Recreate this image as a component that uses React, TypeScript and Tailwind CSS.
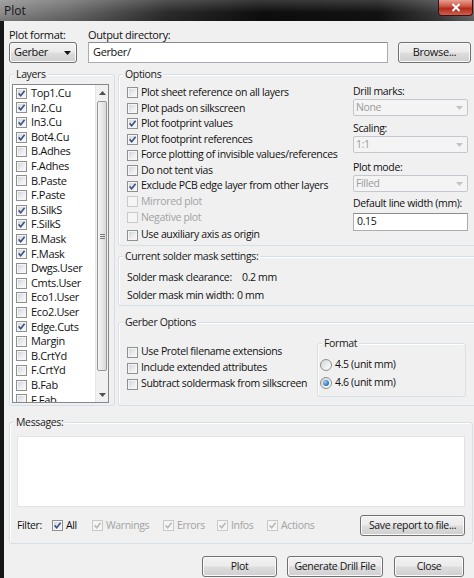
import React from "react";

const FONT = "font-['Open_Sans',sans-serif]";

function Check({ checked = false, disabled = false }: { checked?: boolean; disabled?: boolean }) {
  return (
    <span
      className={`relative inline-block shrink-0 w-[11px] h-[11px] border ${
        disabled
          ? "border-[#c9c9c9] bg-[#f5f5f5]"
          : "border-[#8e8f8f] bg-[linear-gradient(135deg,#cdd1d6_0%,#eeeeee_60%,#fbfbfb_100%)] shadow-[inset_0_0_0_1px_#f6f6f6]"
      }`}
    >
      {checked && (
        <svg viewBox="0 0 9 9" className="absolute left-0 top-0 w-[9px] h-[9px]">
          <path
            d="M1.6 4.4 L3.7 6.7 L7.6 1.7"
            fill="none"
            stroke={disabled ? "#b9b9b9" : "#3b5087"}
            strokeWidth="1.6"
          />
        </svg>
      )}
    </span>
  );
}

function Radio({ checked = false }: { checked?: boolean }) {
  return (
    <span className="relative inline-flex items-center justify-center shrink-0 w-[12px] h-[12px] rounded-full border border-[#8e8f8f] bg-[linear-gradient(135deg,#cfd3d8_0%,#f2f2f2_65%,#ffffff_100%)]">
      {checked && (
        <span className="w-[6px] h-[6px] rounded-full bg-[radial-gradient(circle_at_35%_35%,#9fd0f3_0%,#3c86c4_55%,#1f4f86_100%)]" />
      )}
    </span>
  );
}

function Btn({ children, className = "" }: { children: React.ReactNode; className?: string }) {
  return (
    <div
      className={`flex items-center justify-center h-[21px] border border-[#707070] rounded-[3px] bg-[linear-gradient(to_bottom,#f2f2f2_0%,#ebebeb_48%,#dddddd_52%,#cfcfcf_100%)] shadow-[inset_0_0_0_1px_#fafafa] text-[#151515] ${className}`}
    >
      {children}
    </div>
  );
}

function DisSelect({ value }: { value: string }) {
  return (
    <div className="flex items-center justify-between h-[17px] border border-[#c4c8cc] rounded-[2px] bg-[#f4f4f4] pl-[2px] pr-[4px] text-[#9b9b9b]">
      <span className="leading-[15px]">{value}</span>
      <svg viewBox="0 0 7 4" className="w-[7px] h-[4px]">
        <path d="M0 0 L7 0 L3.5 4 Z" fill="#c3c3c3" />
      </svg>
    </div>
  );
}

function Group({
  label,
  className = "",
  children,
}: {
  label: string;
  className?: string;
  children?: React.ReactNode;
}) {
  return (
    <div className={`relative border border-[#d5dfe5] rounded-[3px] shadow-[inset_1px_1px_0_#ffffff] ${className}`}>
      <span className="absolute left-[4px] top-[-8px] px-[2px] bg-[#f0f0f0] leading-[14px] text-[#1a1a1a] whitespace-nowrap">
        {label}
      </span>
      {children}
    </div>
  );
}

const layers: [string, boolean][] = [
  ["Top1.Cu", true],
  ["In2.Cu", true],
  ["In3.Cu", true],
  ["Bot4.Cu", true],
  ["B.Adhes", false],
  ["F.Adhes", false],
  ["B.Paste", false],
  ["F.Paste", false],
  ["B.SilkS", true],
  ["F.SilkS", true],
  ["B.Mask", true],
  ["F.Mask", true],
  ["Dwgs.User", false],
  ["Cmts.User", false],
  ["Eco1.User", false],
  ["Eco2.User", false],
  ["Edge.Cuts", true],
  ["Margin", false],
  ["B.CrtYd", false],
  ["F.CrtYd", false],
  ["B.Fab", false],
  ["F.Fab", false],
];

const options: [string, boolean, boolean][] = [
  ["Plot sheet reference on all layers", false, false],
  ["Plot pads on silkscreen", false, false],
  ["Plot footprint values", true, false],
  ["Plot footprint references", true, false],
  ["Force plotting of invisible values/references", false, false],
  ["Do not tent vias", false, false],
  ["Exclude PCB edge layer from other layers", true, false],
  ["Mirrored plot", false, true],
  ["Negative plot", false, true],
];

export default function App() {
  return (
    <div className={`w-[474px] h-[578px] overflow-hidden bg-[#f0f0f0] flex flex-col text-[10.5px] tracking-[-0.35px] text-[#111] ${FONT}`}>
      {/* Title bar */}
      <div className="relative h-[21px] shrink-0 flex items-center pl-[4px] bg-[linear-gradient(to_right,#8d8d8d_0%,#6a6a6a_15%,#2c2c2c_35%,#0e0e0e_55%,#121212_80%,#3a3a3a_92%,#6d6d6d_100%)]">
        <div className="absolute inset-0 bg-[linear-gradient(to_bottom,rgba(255,255,255,0.18)_0%,rgba(255,255,255,0)_60%,rgba(0,0,0,0.15)_100%)]" />
        <span className="relative text-[12px] text-[#161616] tracking-normal">Plot</span>
        <div className="absolute right-[1px] top-0 w-[35px] h-[16px] rounded-b-[4px] border border-t-0 border-[#3b1010] bg-[linear-gradient(to_bottom,#e8a090_0%,#c85040_45%,#b02818_55%,#d06050_100%)] flex items-center justify-center">
          <svg viewBox="0 0 10 9" className="w-[10px] h-[9px]">
            <path d="M1.5 1 L8.5 8 M8.5 1 L1.5 8" stroke="#ffffff" strokeWidth="2" />
          </svg>
        </div>
      </div>

      <div className="flex flex-1 min-h-0">
        <div className="w-[4px] shrink-0 bg-[#161616]" />
        <div className="flex-1 flex flex-col pl-[5px] pt-[6px] min-w-0">
          {/* Row 1 */}
          <div className="flex items-end">
            <div className="w-[68px] flex flex-col">
              <span className="h-[15px] leading-[15px] whitespace-nowrap text-[11px]">Plot format:</span>
              <div className="flex items-center justify-between h-[21px] border border-[#707070] rounded-[3px] bg-[linear-gradient(to_bottom,#f2f2f2_0%,#ebebeb_48%,#dddddd_52%,#cfcfcf_100%)] shadow-[inset_0_0_0_1px_#fafafa] pl-[4px] pr-[5px]">
                <span className="text-[11px]">Gerber</span>
                <svg viewBox="0 0 7 4" className="w-[7px] h-[4px]">
                  <path d="M0 0 L7 0 L3.5 4 Z" fill="#111" />
                </svg>
              </div>
            </div>
            <div className="ml-[11px] w-[300px] flex flex-col">
              <span className="h-[15px] leading-[15px] whitespace-nowrap text-[11px]">Output directory:</span>
              <div className="flex items-center h-[21px] bg-white border border-[#abadb3] border-t-[#8a8c92] pl-[4px] text-[11px]">
                Gerber/
              </div>
            </div>
            <Btn className="ml-[10px] w-[73px] text-[11px]">Browse...</Btn>
          </div>

          {/* Main area */}
          <div className="flex mt-[11px]">
            <Group label="Layers" className="w-[106px] h-[332px] shrink-0 pt-[9px] pl-[2px]">
              <div className="flex w-[97px] h-[319px] border border-[#828790] bg-white overflow-hidden">
                <div className="w-[82px] flex flex-col pt-[1px] overflow-hidden">
                  {layers.map(([name, on]) => (
                    <div key={name} className="flex items-center h-[14.6px] shrink-0 pl-[3px] gap-[4px] whitespace-nowrap text-[11px]">
                      <Check checked={on} />
                      <span>{name}</span>
                    </div>
                  ))}
                </div>
                <div className="w-[13px] flex flex-col bg-[#f0f0f0] border-l border-[#e6e6e6]">
                  <div className="h-[16px] flex items-center justify-center">
                    <svg viewBox="0 0 7 4" className="w-[7px] h-[4px]">
                      <path d="M0 4 L7 4 L3.5 0 Z" fill="#505050" />
                    </svg>
                  </div>
                  <div className="h-[270px] mx-[1px] rounded-[2px] border border-[#979797] bg-[linear-gradient(to_right,#f4f4f4_0%,#e8e8e8_50%,#d8d8d8_100%)] flex items-center justify-center">
                    <div className="flex flex-col gap-[1px]">
                      <div className="w-[5px] h-[1px] bg-[#7a7a7a]" />
                      <div className="w-[5px] h-[1px] bg-[#7a7a7a]" />
                      <div className="w-[5px] h-[1px] bg-[#7a7a7a]" />
                    </div>
                  </div>
                  <div className="flex-1 flex items-end justify-center pb-[5px]">
                    <svg viewBox="0 0 7 4" className="w-[7px] h-[4px]">
                      <path d="M0 0 L7 0 L3.5 4 Z" fill="#505050" />
                    </svg>
                  </div>
                </div>
              </div>
            </Group>

            <div className="ml-[3px] w-[360px] shrink-0 flex flex-col">
              <Group label="Options" className="h-[172px] flex">
                <div className="w-[234px] pl-[8px] pt-[10px] flex flex-col">
                  {options.map(([t, on, dis]) => (
                    <div key={t} className={`flex items-center h-[15.6px] gap-[3px] whitespace-nowrap ${dis ? "text-[#a3a3a3]" : ""}`}>
                      <Check checked={on} disabled={dis} />
                      <span>{t}</span>
                    </div>
                  ))}
                  <div className="flex items-center h-[15.6px] mt-[2px] gap-[3px] whitespace-nowrap">
                    <Check />
                    <span>Use auxiliary axis as origin</span>
                  </div>
                </div>
                <div className="w-[115px] pt-[9px] flex flex-col">
                  <span className="h-[15px] leading-[15px]">Drill marks:</span>
                  <DisSelect value="None" />
                  <span className="h-[15px] leading-[15px] mt-[5px]">Scaling:</span>
                  <DisSelect value="1:1" />
                  <span className="h-[15px] leading-[15px] mt-[7px]">Plot mode:</span>
                  <DisSelect value="Filled" />
                  <span className="h-[15px] leading-[15px] mt-[4px] whitespace-nowrap">Default line width (mm):</span>
                  <div className="mt-[2px] h-[18px] flex items-center bg-white border border-[#abadb3] border-t-[#8a8c92] pl-[3px]">
                    0.15
                  </div>
                </div>
              </Group>

              <Group label="Current solder mask settings:" className="mt-[10px] h-[50px] pl-[8px] pt-[13px]">
                <div className="flex items-center h-[16px]">
                  <span className="w-[115px] whitespace-nowrap">Solder mask clearance:</span>
                  <span>0.2 mm</span>
                </div>
                <div className="flex items-center h-[16px] mt-[2px]">
                  <span className="w-[110px] whitespace-nowrap">Solder mask min width:</span>
                  <span>0 mm</span>
                </div>
              </Group>

              <Group label="Gerber Options" className="mt-[16px] h-[84px] flex">
                <div className="w-[198px] pl-[8px] pt-[21px] flex flex-col">
                  {["Use Protel filename extensions", "Include extended attributes", "Subtract soldermask from silkscreen"].map((t) => (
                    <div key={t} className="flex items-center h-[16px] gap-[3px] whitespace-nowrap">
                      <Check />
                      <span>{t}</span>
                    </div>
                  ))}
                </div>
                <Group label="Format" className="mt-[20px] w-[149px] h-[54px] pl-[2px] pt-[12px]">
                  <div className="flex items-center h-[18px] gap-[3px] whitespace-nowrap">
                    <Radio />
                    <span>4.5 (unit mm)</span>
                  </div>
                  <div className="flex items-center h-[18px] gap-[3px] whitespace-nowrap">
                    <Radio checked />
                    <span>4.6 (unit mm)</span>
                  </div>
                </Group>
              </Group>
            </div>
          </div>

          {/* Messages */}
          <Group label="Messages:" className="mt-[16px] w-[464px] pt-[13px] pl-[7px] pr-[7px] pb-[7px]">
            <div className="h-[71px] bg-white border border-[#e3e3e3]" />
            <div className="flex items-center h-[21px] mt-[8px] whitespace-nowrap">
              <span className="w-[35px]">Filter:</span>
              <div className="w-[40px] flex items-center gap-[3px]">
                <Check checked />
                <span>All</span>
              </div>
              <div className="w-[71px] flex items-center gap-[3px] text-[#a3a3a3]">
                <Check checked disabled />
                <span>Warnings</span>
              </div>
              <div className="w-[54px] flex items-center gap-[3px] text-[#a3a3a3]">
                <Check checked disabled />
                <span>Errors</span>
              </div>
              <div className="w-[50px] flex items-center gap-[3px] text-[#a3a3a3]">
                <Check checked disabled />
                <span>Infos</span>
              </div>
              <div className="flex items-center gap-[3px] text-[#a3a3a3]">
                <Check checked disabled />
                <span>Actions</span>
              </div>
              <Btn className="ml-auto w-[105px]">Save report to file...</Btn>
            </div>
          </Group>

          {/* Bottom buttons */}
          <div className="flex justify-end mt-[12px] pr-[10px]">
            <Btn className="w-[75px]">Plot</Btn>
            <Btn className="ml-[10px] w-[96px]">Generate Drill File</Btn>
            <Btn className="ml-[11px] w-[70px]">Close</Btn>
          </div>
        </div>
      </div>
    </div>
  );
}
